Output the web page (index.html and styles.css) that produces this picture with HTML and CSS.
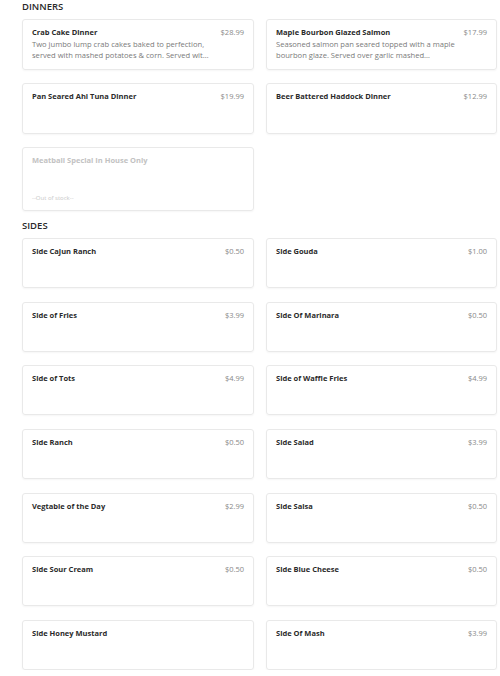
FILE: index.html
```html
<!DOCTYPE html>
<html lang="en">
<head>
<meta charset="UTF-8">
<title>Menu</title>
<link rel="stylesheet" href="styles.css">
</head>
<body>
<div class="menu">
	<h2 class="section-title">DINNERS</h2>
	<div class="item-grid">
		<div class="item">
			<div class="item-head"><span class="item-name">Crab Cake Dinner</span><span class="item-price">$28.99</span></div>
			<p class="item-desc">Two jumbo lump crab cakes baked to perfection, served with mashed potatoes &amp; corn. Served wit…</p>
		</div>
		<div class="item">
			<div class="item-head"><span class="item-name">Maple Bourbon Glazed Salmon</span><span class="item-price">$17.99</span></div>
			<p class="item-desc">Seasoned salmon pan seared topped with a maple bourbon glaze. Served over garlic mashed…</p>
		</div>
		<div class="item">
			<div class="item-head"><span class="item-name">Pan Seared Ahi Tuna Dinner</span><span class="item-price">$19.99</span></div>
		</div>
		<div class="item">
			<div class="item-head"><span class="item-name">Beer Battered Haddock Dinner</span><span class="item-price">$12.99</span></div>
		</div>
		<div class="item item-out">
			<div class="item-head"><span class="item-name">Meatball Special In House Only</span></div>
			<p class="item-stock">--Out of stock--</p>
		</div>
	</div>

	<h2 class="section-title">SIDES</h2>
	<div class="item-grid item-grid-sides">
		<div class="item"><div class="item-head"><span class="item-name">Side Cajun Ranch</span><span class="item-price">$0.50</span></div></div>
		<div class="item"><div class="item-head"><span class="item-name">Side Gouda</span><span class="item-price">$1.00</span></div></div>
		<div class="item"><div class="item-head"><span class="item-name">Side of Fries</span><span class="item-price">$3.99</span></div></div>
		<div class="item"><div class="item-head"><span class="item-name">Side Of Marinara</span><span class="item-price">$0.50</span></div></div>
		<div class="item"><div class="item-head"><span class="item-name">Side of Tots</span><span class="item-price">$4.99</span></div></div>
		<div class="item"><div class="item-head"><span class="item-name">Side of Waffle Fries</span><span class="item-price">$4.99</span></div></div>
		<div class="item"><div class="item-head"><span class="item-name">Side Ranch</span><span class="item-price">$0.50</span></div></div>
		<div class="item"><div class="item-head"><span class="item-name">Side Salad</span><span class="item-price">$3.99</span></div></div>
		<div class="item"><div class="item-head"><span class="item-name">Vegtable of the Day</span><span class="item-price">$2.99</span></div></div>
		<div class="item"><div class="item-head"><span class="item-name">Side Salsa</span><span class="item-price">$0.50</span></div></div>
		<div class="item"><div class="item-head"><span class="item-name">Side Sour Cream</span><span class="item-price">$0.50</span></div></div>
		<div class="item"><div class="item-head"><span class="item-name">Side Blue Cheese</span><span class="item-price">$0.50</span></div></div>
		<div class="item"><div class="item-head"><span class="item-name">Side Honey Mustard</span></div></div>
		<div class="item"><div class="item-head"><span class="item-name">Side Of Mash</span><span class="item-price">$3.99</span></div></div>
	</div>
</div>
</body>
</html>
```

FILE: styles.css
```css
html, body, div, h2, p { margin:0; padding:0; }
body { font:normal 8px "Open Sans", Arial, sans-serif; color:#222; background:#fff; }
.menu { padding:0 3px 0 22px; }
.section-title { height:18px; padding-top:1px; box-sizing:border-box; font-size:9.5px; font-weight:600; line-height:12px; color:#2a2a2a; }
.section-title + .item-grid { margin-top:1px; }
.item-grid + .section-title { margin-top:8px; }
.item-grid { display:grid; grid-template-columns:232px 231px; column-gap:12px; row-gap:13px; align-items:start; }
.item-grid-sides { row-gap:13.67px; }
.item { min-height:51px; box-sizing:border-box; padding:7px 9px; border:1px solid #e9e9e9; border-radius:3px; box-shadow:0 1px 2px rgba(0,0,0,0.04); }
.item-grid-sides .item { min-height:50px; }
.item-head { display:flex; justify-content:space-between; align-items:baseline; line-height:11px; }
.item-name { font-weight:700; font-size:7.5px; color:#2a2a2a; }
.item-price { font-size:7.5px; color:#888; }
.item-desc { margin-top:1px; padding-right:24px; font-size:7.6px; line-height:11px; color:#7a7a7a; }
.item-out { height:64px; }
.item-out .item-name { color:#c2c2c2; }
.item-stock { margin-top:28px; font-size:6px; line-height:8px; color:#c8c8c8; }
```
